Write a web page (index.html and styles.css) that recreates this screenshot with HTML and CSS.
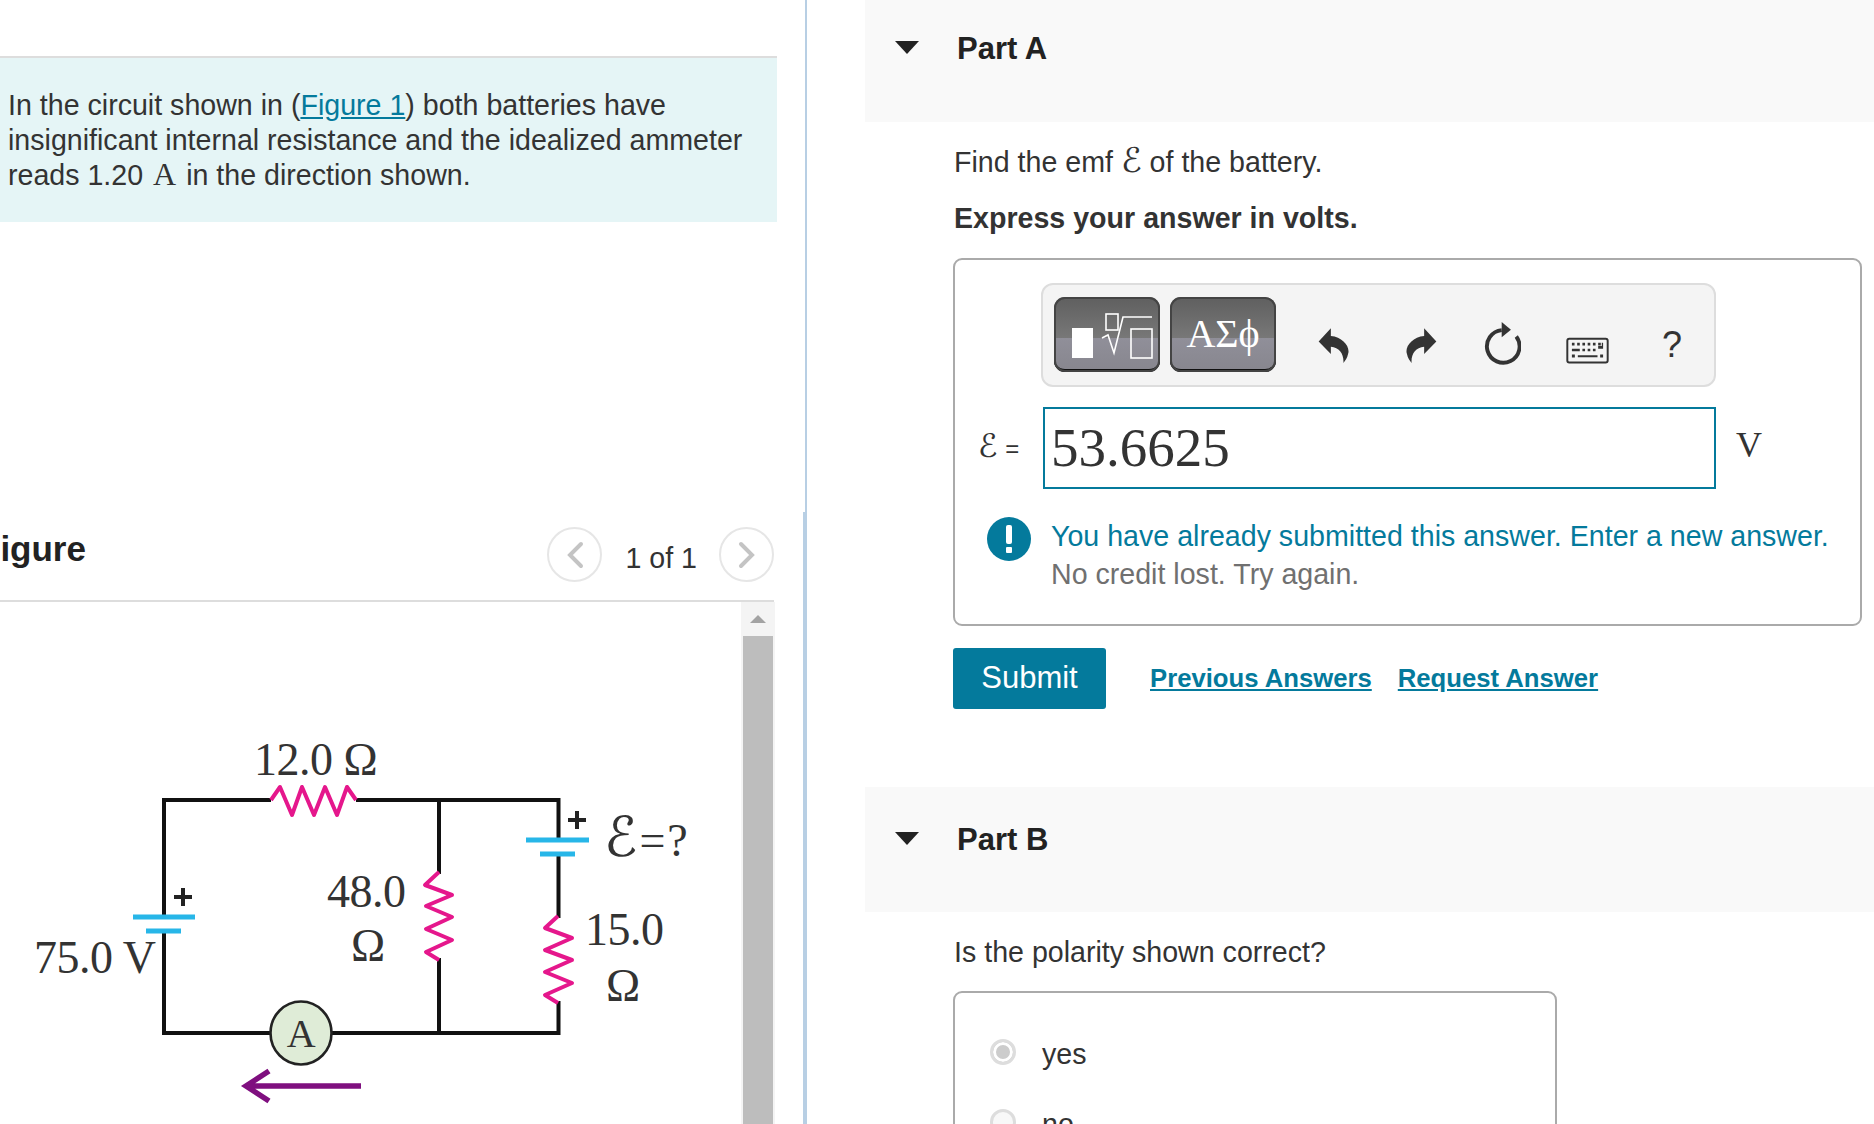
FILE: index.html
```html
<!DOCTYPE html>
<html lang="en">
<head>
    <meta charset="UTF-8">
    <meta name="viewport" content="width=device-width, initial-scale=1.0">
    <title>Part A</title>
    <link rel="stylesheet" href="styles.css">
</head>
<body>
    <div class="left">
        <div class="intro">
            In the circuit shown in (<a href="#">Figure 1</a>) both batteries have
            insignificant internal resistance and the idealized ammeter
            reads 1.20 <span class="unit-a">A</span> in the direction shown.
        </div>
        <div class="figure-head">
            <h2>Figure</h2>
            <div class="pager">
                <span class="round-btn">
                    <svg width="20" height="28" viewBox="0 0 20 28"><path d="M16 3 L5 14 L16 25"/></svg>
                </span>
                <span class="pager-text">1 of 1</span>
                <span class="round-btn">
                    <svg width="20" height="28" viewBox="0 0 20 28"><path d="M4 3 L15 14 L4 25"/></svg>
                </span>
            </div>
        </div>
        <div class="figure-body">
            <svg class="circuit" width="741" height="522" viewBox="0 602 741 522">
                <g class="wire">
                    <path d="M269 800 H164 V917 M164 931 V1033 H270 M332 1033 H558.5 V1003 M558.5 916 V854 M558.5 840 V800 H358"/>
                    <path d="M439 800 V872 M439 960 V1033"/>
                </g>
                <g class="resistor">
                    <polyline points="271,800 280,787 292,815 302,787 314,815 325,787 337,815 347,787 356,800"/>
                    <polyline points="439,872 425,885 452,895 426,906 452,917 426,929 452,940 426,952 439,960"/>
                    <polyline points="558,916 545,928 572,938 545,950 572,960 545,972 572,983 545,995 558,1003"/>
                </g>
                <g class="plate">
                    <path d="M133 917 H195 M146 931 H181 M526 840 H589 M540 854 H575"/>
                </g>
                <path class="plus" d="M174 897 H192 M183 888 V906 M568 820 H586 M577 811 V829"/>
                <ellipse class="ammeter" cx="301" cy="1033" rx="30.5" ry="31.5"/>
                <path class="arrow" d="M361 1086 H246 M269 1071 L246 1086 L269 1101"/>
                <g class="label">
                    <text x="254" y="775">12.0 Ω</text>
                    <text x="327" y="907">48.0</text>
                    <text x="351" y="961">Ω</text>
                    <text x="585" y="945">15.0</text>
                    <text x="606" y="1001">Ω</text>
                    <text x="34" y="973">75.0 V</text>
                    <text class="eq-label" x="604" y="856"><tspan class="script">ℰ</tspan>=?</text>
                    <text class="amm-letter" x="301" y="1047">A</text>
                </g>
            </svg>
            <div class="scrollbar">
                <div class="scroll-up"></div>
                <div class="scroll-thumb"></div>
            </div>
        </div>
    </div>

    <div class="divider">
        <div class="divider-top"></div>
        <div class="divider-bottom"></div>
    </div>

    <div class="right">
        <div class="part-head part-first">
            <span class="caret"></span>
            <h3>Part A</h3>
        </div>
        <div class="part-body">
            <p class="question">Find the emf <span class="script">ℰ</span> of the battery.</p>
            <p class="question-bold">Express your answer in volts.</p>
            <div class="answer-box">
                <div class="toolbar">
                    <span class="tool-btn">
                        <svg width="106" height="75" viewBox="1054 297 106 75">
                            <rect x="1072" y="328" width="21" height="30" fill="#fff"/>
                            <g fill="none" stroke="#fff" stroke-width="1.6">
                                <rect x="1106" y="314" width="12" height="16"/>
                                <rect x="1131" y="329" width="21" height="29"/>
                                <path d="M1102 338 L1108 335 L1114 353 L1123 317 H1152"/>
                            </g>
                        </svg>
                    </span>
                    <span class="tool-btn tool-btn-text">ΑΣϕ</span>
                    <svg class="icon icon-undo" width="33" height="37" viewBox="50 48 100 112">
                        <path d="M55 92 L92 52 V75 C128 78 152 108 144 130 C142 142 136 150 130 157 C132 130 118 110 92 108 V130 Z"/>
                    </svg>
                    <svg class="icon icon-redo" width="33" height="37" viewBox="50 48 100 112">
                        <path d="M145 92 L108 52 V75 C72 78 48 108 56 130 C58 142 64 150 70 157 C68 130 82 110 108 108 V130 Z"/>
                    </svg>
                    <svg class="icon icon-reset" width="40" height="44" viewBox="552 43 112 124">
                        <path d="M651 84 A46 46 0 1 1 610 66" fill="none" stroke="#333" stroke-width="11"/>
                        <path d="M610 43 L636 65 L610 86 Z"/>
                    </svg>
                    <svg class="icon icon-keys" width="43" height="27" viewBox="798 81 131 81">
                        <rect x="802" y="86" width="123" height="72" rx="6" fill="#f4f4f4" stroke="#333" stroke-width="6"/>
                        <path d="M816 98 h8 v8 h-8z M832 98 h8 v8 h-8z M848 98 h8 v8 h-8z M864 98 h8 v8 h-8z M880 98 h8 v8 h-8z M896 98 h8 v8 h-8z M816 116 h24 v8 h-24z M848 116 h8 v8 h-8z M864 116 h8 v8 h-8z M880 116 h8 v8 h-8z M896 116 h15 v-18 h-4 v10 h-11z M816 134 h9 v9 h-9z M834 136 h60 v6 h-60z M902 134 h9 v9 h-9z"/>
                    </svg>
                    <span class="icon-help">?</span>
                </div>
                <div class="input-row">
                    <label class="input-label"><span class="script">ℰ</span> <span class="equals">=</span></label>
                    <div class="answer-input">53.6625</div>
                    <span class="unit">V</span>
                </div>
                <div class="message">
                    <svg width="44" height="44" viewBox="0 0 44 44">
                        <circle cx="22" cy="22" r="22" fill="#047a9c"/>
                        <rect x="19" y="8" width="6" height="19" rx="2" fill="#fff"/>
                        <rect x="19" y="30" width="6" height="6" rx="1" fill="#fff"/>
                    </svg>
                    <div>
                        <div class="message-main">You have already submitted this answer. Enter a new answer.</div>
                        <div class="message-sub">No credit lost. Try again.</div>
                    </div>
                </div>
            </div>
            <div class="actions">
                <button class="submit">Submit</button>
                <a href="#" class="action-link first-link">Previous Answers</a>
                <a href="#" class="action-link">Request Answer</a>
            </div>
        </div>

        <div class="part-head part-second">
            <span class="caret"></span>
            <h3>Part B</h3>
        </div>
        <div class="part-body">
            <p class="question">Is the polarity shown correct?</p>
            <div class="choice-box">
                <div class="choice"><span class="radio radio-on"></span>yes</div>
                <div class="choice"><span class="radio"></span>no</div>
            </div>
        </div>
    </div>
</body>
</html>
```

FILE: styles.css
```css
html, body {
    height: 1124px;
    margin: 0;
    overflow: hidden;
}
body {
    display: flex;
    font-family: "Liberation Sans", Arial, sans-serif;
    font-size: 28.6px;
    line-height: 36px;
    color: #333;
    background: #fff;
}
a {
    color: #047a9c;
}
.unit-a {
    margin: 0 2px;
    font-family: "Liberation Serif", serif;
    font-size: 32px;
    line-height: 0;
}
.script {
    font-family: "DejaVu Sans", sans-serif;
    font-style: italic;
    font-size: 1.2em;
    line-height: 0;
}

/* left column */
.left {
    width: 803px;
    height: 1124px;
    flex-shrink: 0;
    overflow: hidden;
}
.intro {
    width: 769px;
    margin-top: 56px;
    padding: 30px 0 29px 8px;
    border-top: 2px solid #ddd;
    background: #e5f5f6;
    line-height: 35px;
}
.figure-head {
    display: flex;
    align-items: flex-start;
    width: 774px;
    height: 74px;
    margin-top: 304px;
    border-bottom: 2px solid #ddd;
}
.figure-head h2 {
    margin: 1px 0 0 -21px;
    font-size: 35px;
    line-height: 44px;
    color: #222;
}
.pager {
    display: flex;
    align-items: flex-start;
    margin-left: auto;
}
.round-btn {
    display: flex;
    align-items: center;
    justify-content: center;
    box-sizing: border-box;
    width: 55px;
    height: 55px;
    margin-top: 1px;
    border: 2px solid #e6e6e6;
    border-radius: 50%;
}
.round-btn svg {
    fill: none;
    stroke: #c4c4c4;
    stroke-width: 4;
    stroke-linecap: round;
}
.pager-text {
    margin: 14px 22px 0 23px;
    line-height: 36px;
}
.figure-body {
    display: flex;
    width: 775px;
    height: 522px;
}
.circuit {
    display: block;
}
.wire {
    fill: none;
    stroke: #111;
    stroke-width: 4;
    stroke-linecap: square;
}
.resistor {
    fill: none;
    stroke: #e5178c;
    stroke-width: 4;
    stroke-linejoin: round;
}
.plate {
    fill: none;
    stroke: #27b6e8;
    stroke-width: 5;
}
.plus {
    fill: none;
    stroke: #222;
    stroke-width: 4;
}
.ammeter {
    fill: #dfecd7;
    stroke: #222;
    stroke-width: 2.6;
}
.arrow {
    fill: none;
    stroke: #7f0f7f;
    stroke-width: 5.5;
}
.label {
    font-family: "Liberation Serif", serif;
    font-size: 46px;
    letter-spacing: -0.5px;
    fill: #333;
}
.eq-label {
    letter-spacing: 2px;
}
.amm-letter {
    font-size: 40px;
    text-anchor: middle;
}
.scrollbar {
    width: 34px;
    background: #f4f4f4;
}
.scroll-up {
    position: relative;
    height: 34px;
}
.scroll-up::after {
    content: "";
    position: absolute;
    left: 9px;
    top: 13px;
    border-left: 8px solid transparent;
    border-right: 8px solid transparent;
    border-bottom: 8px solid #a3a3a3;
}
.scroll-thumb {
    height: 488px;
    margin: 0 2px;
    background: #bdbdbd;
}

/* divider between the columns */
.divider {
    display: flex;
    flex-direction: column;
    width: 4px;
    flex-shrink: 0;
}
.divider-top {
    width: 2px;
    height: 512px;
    margin-left: 2px;
    background: #b8cfe4;
}
.divider-bottom {
    flex: 1;
    background: #b8cfe4;
}

/* right column */
.right {
    flex: 1;
    height: 1124px;
    overflow: hidden;
    padding-left: 58px;
}
.part-head {
    display: flex;
    align-items: flex-start;
    box-sizing: border-box;
    height: 125px;
    padding: 34px 0 0 30px;
    background: #f9f9f9;
}
.part-first {
    height: 122px;
    padding-top: 30px;
}
.part-second {
    margin-top: 78px;
}
.part-head h3 {
    margin: 1px 0 0 38px;
    font-size: 31px;
    line-height: 36px;
    color: #222;
}
.caret {
    margin-top: 11px;
    border-left: 12px solid transparent;
    border-right: 12px solid transparent;
    border-top: 13px solid #222;
}
.part-body {
    padding-left: 88px;
}
.question {
    margin: 22px 0 0 1px;
}
.question-bold {
    margin: 20px 0 0 1px;
    font-weight: bold;
}
.answer-box {
    box-sizing: border-box;
    width: 909px;
    height: 368px;
    margin-top: 22px;
    padding-top: 23px;
    border: 2px solid #aaa;
    border-radius: 9px;
}
.toolbar {
    display: flex;
    align-items: flex-start;
    box-sizing: border-box;
    width: 675px;
    height: 104px;
    margin-left: 86px;
    padding: 12px 0 0 11px;
    border: 2px solid #ddd;
    border-radius: 12px;
    background: #f4f4f4;
}
.tool-btn {
    display: block;
    box-sizing: border-box;
    width: 106px;
    height: 75px;
    margin-right: 10px;
    border-radius: 11px;
    box-shadow: inset 0 0 0 2px #444, inset 0 -3px 0 #111;
    background: linear-gradient(#5f5f5f 0, #787878 55%, #908f99 55%, #87868e 100%);
}
.tool-btn svg {
    display: block;
}
.tool-btn-text {
    margin-right: 0;
    color: #fff;
    font-family: "Liberation Serif", serif;
    font-size: 40px;
    line-height: 73px;
    text-align: center;
}
.icon {
    display: block;
    fill: #333;
}
.icon-undo {
    margin: 30px 0 0 41px;
}
.icon-redo {
    margin: 30px 0 0 55px;
}
.icon-reset {
    margin: 25px 0 0 43px;
}
.icon-keys {
    margin: 40px 0 0 45px;
}
.icon-help {
    margin: 26px 0 0 53px;
    font-size: 36px;
    line-height: 44px;
}
.input-row {
    display: flex;
    align-items: center;
    margin-top: 20px;
    padding-left: 23px;
}
.input-label {
    width: 65px;
    line-height: 36px;
    font-size: 27px;
}
.equals {
    font-size: 24px;
}
.answer-input {
    box-sizing: border-box;
    width: 673px;
    height: 82px;
    padding-left: 6px;
    border: 2px solid #047a9c;
    font-family: "Liberation Serif", serif;
    font-size: 55px;
    line-height: 78px;
}
.unit {
    margin: 0 0 6px 20px;
    font-family: "Liberation Serif", serif;
    font-size: 36px;
}
.message {
    display: flex;
    align-items: flex-start;
    gap: 20px;
    margin: 28px 0 0 32px;
    line-height: 38px;
}
.message-main {
    color: #047a9c;
}
.message-sub {
    color: #707070;
}
.actions {
    display: flex;
    align-items: center;
    margin-top: 22px;
}
.submit {
    width: 153px;
    height: 61px;
    padding: 0 0 2px;
    border: none;
    border-radius: 3px;
    background: #047a9c;
    color: #fff;
    font-family: inherit;
    font-size: 31px;
}
.action-link {
    margin: 0 0 2px 26px;
    font-size: 25.7px;
    font-weight: bold;
}
.first-link {
    margin-left: 44px;
}
.choice-box {
    box-sizing: border-box;
    width: 604px;
    height: 260px;
    margin-top: 21px;
    padding: 43px 0 0 35px;
    border: 2px solid #aaa;
    border-radius: 9px;
}
.choice {
    display: flex;
    align-items: center;
    gap: 26px;
    margin-bottom: 34px;
}
.radio {
    display: block;
    box-sizing: border-box;
    width: 26px;
    height: 26px;
    margin-bottom: 4px;
    border: 3px solid #ddd;
    border-radius: 50%;
    background: #f8f8f8;
}
.radio-on {
    background: #ccc;
    box-shadow: inset 0 0 0 3px #fff;
}
```
